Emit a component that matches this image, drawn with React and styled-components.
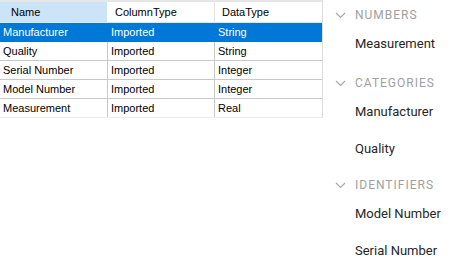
import styled, { createGlobalStyle } from "styled-components";

const GlobalStyle = createGlobalStyle`
  html, body {
    margin: 0;
    padding: 0;
    background: #ffffff;
  }
`;

const columns = [
  { key: "name", title: "Name", width: 108 },
  { key: "columnType", title: "ColumnType", width: 107 },
  { key: "dataType", title: "DataType", width: 107 },
];

const rows = [
  { name: "Manufacturer", columnType: "Imported", dataType: "String" },
  { name: "Quality", columnType: "Imported", dataType: "String" },
  { name: "Serial Number", columnType: "Imported", dataType: "Integer" },
  { name: "Model Number", columnType: "Imported", dataType: "Integer" },
  { name: "Measurement", columnType: "Imported", dataType: "Real" },
];

const groups = [
  { title: "Numbers", items: ["Measurement"] },
  { title: "Categories", items: ["Manufacturer", "Quality"] },
  { title: "Identifiers", items: ["Model Number", "Serial Number"] },
];

const Page = styled.div`
  display: flex;
  align-items: flex-start;
  gap: 12px;
  width: 474px;
  height: 267px;
  overflow: hidden;
`;

const Grid = styled.div`
  width: 322px;
  border-top: 2px solid #e6e6e6;
  border-right: 1px solid #dcdcdc;
  border-bottom: 1px solid #ececec;
  font-family: "Liberation Sans", Arial, sans-serif;
  font-size: 11px;
  color: #000;
`;

const HeaderRow = styled.div`
  display: flex;
  height: 20px;
  border-bottom: 1px solid #e4e4e4;
`;

const HeaderCell = styled.div`
  display: flex;
  align-items: center;
  width: ${(p) => p.$width}px;
  padding-left: ${(p) => (p.$sorted ? 11 : 7)}px;
  box-sizing: border-box;
  background: ${(p) => (p.$sorted ? "#cce4f7" : "#ffffff")};
  border-right: 1px solid ${(p) => (p.$sorted ? "#ffffff" : "#e4e4e4")};
  &:last-child {
    border-right: none;
  }
`;

const Row = styled.div`
  display: flex;
  height: 18px;
  background: ${(p) => (p.$selected ? "#0078d7" : "#ffffff")};
  color: ${(p) => (p.$selected ? "#ffffff" : "#000000")};
  border-bottom: 1px solid ${(p) => (p.$selected ? "#0078d7" : "#c8c8c8")};
  &:last-child {
    border-bottom: none;
  }
`;

const Cell = styled.div`
  display: flex;
  align-items: center;
  width: ${(p) => p.$width}px;
  padding-left: 3px;
  box-sizing: border-box;
  border-right: 1px solid ${(p) => (p.$selected ? "#0078d7" : "#c8c8c8")};
  white-space: nowrap;
  &:last-child {
    border-right: none;
  }
`;

const Panel = styled.div`
  display: flex;
  flex-direction: column;
  padding-top: 6px;
  font-family: Roboto, "Noto Sans", sans-serif;
`;

const Group = styled.div`
  display: flex;
  flex-direction: column;
  margin-bottom: 11px;
`;

const GroupHeader = styled.div`
  display: flex;
  align-items: center;
  gap: 9px;
  height: 18px;
  color: #a0a0a0;
  font-size: 12px;
  letter-spacing: 1px;
  text-transform: uppercase;
`;

const Item = styled.div`
  display: flex;
  align-items: center;
  height: ${(p) => (p.$first ? 39 : 34)}px;
  padding-left: 20px;
  color: #262626;
  font-size: 13px;
`;

function Chevron() {
  return (
    <svg width="11" height="7" viewBox="0 0 11 7" fill="none">
      <path d="M1 1 L5.5 5.5 L10 1" stroke="#a8a8a8" strokeWidth="1.2" />
    </svg>
  );
}

export default function App() {
  return (
    <Page>
      <GlobalStyle />
      <Grid>
        <HeaderRow>
          {columns.map((c, i) => (
            <HeaderCell key={c.key} $width={c.width} $sorted={i === 0}>
              {c.title}
            </HeaderCell>
          ))}
        </HeaderRow>
        {rows.map((r, i) => (
          <Row key={r.name} $selected={i === 0}>
            {columns.map((c) => (
              <Cell key={c.key} $width={c.width} $selected={i === 0}>
                {r[c.key]}
              </Cell>
            ))}
          </Row>
        ))}
      </Grid>
      <Panel>
        {groups.map((g) => (
          <Group key={g.title}>
            <GroupHeader>
              <Chevron />
              {g.title}
            </GroupHeader>
            {g.items.map((it, i) => (
              <Item key={it} $first={i === 0}>
                {it}
              </Item>
            ))}
          </Group>
        ))}
      </Panel>
    </Page>
  );
}
